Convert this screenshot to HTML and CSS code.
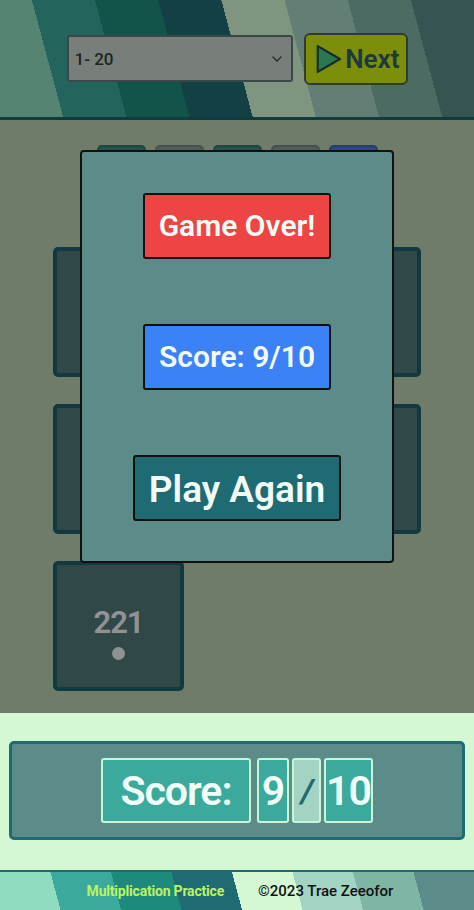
FILE: index.html
```html
<!DOCTYPE html>
<html lang="en">
<head>
    <meta charset="UTF-8">
    <meta name="viewport" content="width=device-width, initial-scale=1.0">
    <title>Multiplication Practice</title>
    <link rel="stylesheet" href="styles.css">
</head>
<body>
    <div class="stage">
        <header class="top stripes">
            <div class="select-wrap">
                <select class="range">
                    <option>1- 20</option>
                    <option>1- 50</option>
                    <option>1- 100</option>
                </select>
                <svg class="chevron" width="10" height="6" viewBox="0 0 10 6">
                    <path d="M1 1 L5 5 L9 1" fill="none" stroke="#3a4a48" stroke-width="1.4" stroke-linecap="round" stroke-linejoin="round"/>
                </svg>
            </div>
            <button class="next">
                <svg width="30" height="34" viewBox="0 0 30 34">
                    <path d="M2 2 L28 17 L2 32 Z" fill="#47c986" stroke="#234a44" stroke-width="2.5" stroke-linejoin="round"/>
                </svg>
                Next
            </button>
        </header>

        <main class="board">
            <div class="choices">
                <div class="choice teal"></div>
                <div class="choice gray"></div>
                <div class="choice teal"></div>
                <div class="choice gray"></div>
                <div class="choice blue"></div>
            </div>
            <div class="cards">
                <div class="card"><span class="num">84</span><span class="dot"></span></div>
                <div class="card"><span class="num">156</span><span class="dot"></span></div>
                <div class="card"><span class="num">90</span><span class="dot"></span></div>
                <div class="card"><span class="num">132</span><span class="dot"></span></div>
                <div class="card"><span class="num">221</span><span class="dot"></span></div>
            </div>
        </main>

        <div class="backdrop"></div>

        <div class="modal">
            <div class="pill over">Game Over!</div>
            <div class="pill result">Score: 9/10</div>
            <button class="pill again">Play Again</button>
        </div>
    </div>

    <section class="score-area">
        <div class="score-bar">
            <div class="box label">Score:</div>
            <div class="box val">9</div>
            <div class="box slash">/</div>
            <div class="box val wide">10</div>
        </div>
    </section>

    <footer class="foot stripes">
        <span class="app">Multiplication Practice</span>
        <span class="copy">©2023 Trae Zeeofor</span>
    </footer>
</body>
</html>
```

FILE: styles.css
```css
* {
    box-sizing: border-box;
}
body {
    margin: 0;
    font-family: Roboto, "Liberation Sans", sans-serif;
    background-color: #d4f8d4;
}
.stage {
    position: relative;
}
.stripes {
    background: linear-gradient(75deg,
        #8fdcc0 0 12.5%, #3ba99c 12.5% 25%, #1e8a7c 25% 37.5%, #1e6b73 37.5% 50%,
        #d4f8d4 50% 62.5%, #a3d3c3 62.5% 75%, #7fb5a5 75% 87.5%, #5b8c89 87.5% 100%);
}
.top {
    height: 120px;
    border-bottom: 3px solid #1a6468;
    display: flex;
    justify-content: center;
    align-items: center;
    gap: 11px;
}
.select-wrap {
    position: relative;
}
.range {
    appearance: none;
    width: 226px;
    height: 47px;
    padding: 0 6px;
    font-family: inherit;
    font-size: 17px;
    font-weight: 500;
    color: #2f3f3f;
    background: #c8d4cb;
    border: 2px solid #5f7878;
    border-radius: 3px;
}
.chevron {
    position: absolute;
    right: 11px;
    top: 21px;
}
.next {
    width: 104px;
    height: 52px;
    display: flex;
    align-items: center;
    gap: 4px;
    padding: 0 6px 0 10px;
    font-family: inherit;
    font-size: 26px;
    font-weight: 600;
    color: #2e6068;
    background: #d0ed11;
    border: 2px solid #4f6650;
    border-radius: 6px;
}
.board {
    height: 593px;
    background: #b9cfaf;
    padding-top: 25px;
}
.choices {
    display: flex;
    justify-content: center;
    gap: 9px;
}
.choice {
    width: 49px;
    height: 49px;
    border-radius: 5px;
    border: 2px solid rgba(0,0,0,0.15);
}
.choice.teal {
    background: #3b8a7c;
}
.choice.gray {
    background: #849e93;
}
.choice.blue {
    background: #4a7bcc;
}
.cards {
    display: grid;
    grid-template-columns: 131px 131px;
    justify-content: center;
    column-gap: 106px;
    row-gap: 27px;
    margin-top: 53px;
}
.card {
    height: 130px;
    background: #507878;
    border: 4px solid #1e5f69;
    border-radius: 5px;
    display: flex;
    flex-direction: column;
    align-items: center;
    justify-content: center;
    gap: 9px;
    padding-top: 14px;
}
.num {
    color: #f4f4f4;
    font-size: 31px;
    font-weight: 600;
    letter-spacing: -1px;
    line-height: 1;
}
.dot {
    width: 13px;
    height: 13px;
    border-radius: 50%;
    background: #eef4f4;
}
.backdrop {
    position: absolute;
    inset: 0;
    background: rgba(0,0,0,0.4);
}
.modal {
    position: absolute;
    top: 150px;
    left: 80px;
    width: 314px;
    height: 413px;
    background: #5b8c89;
    border: 2px solid #111;
    border-radius: 4px;
    display: flex;
    flex-direction: column;
    align-items: center;
    justify-content: center;
    gap: 65px;
}
.pill {
    height: 66px;
    display: flex;
    align-items: center;
    justify-content: center;
    color: #f2fbf6;
    font-family: inherit;
    font-weight: 600;
    border: 2px solid #111;
    border-radius: 3px;
    padding: 0;
}
.over {
    width: 188px;
    background: #ef4444;
    font-size: 30px;
}
.result {
    width: 188px;
    background: #3b82f6;
    font-size: 30px;
}
.again {
    width: 208px;
    background: #1e6b73;
    font-size: 37px;
    padding-top: 4px;
}
.score-area {
    height: 157px;
    padding: 28px 9px 0;
}
.score-bar {
    height: 99px;
    background: #5b8c89;
    border: 3px solid #1e6b73;
    border-radius: 5px;
    display: flex;
    justify-content: center;
    align-items: center;
    gap: 3px;
}
.box {
    height: 65px;
    display: flex;
    align-items: center;
    justify-content: center;
    background: #3ba99c;
    border: 2px solid #c8f5d8;
    border-radius: 3px;
    color: #f0fff8;
    font-size: 41px;
    font-weight: 600;
    letter-spacing: -1px;
}
.label {
    width: 150px;
    margin-right: 3px;
}
.val {
    width: 32px;
}
.val.wide {
    width: 49px;
}
.slash {
    width: 29px;
    background: #a3d3c3;
    color: #1e6b73;
    font-size: 34px;
    font-weight: 700;
    font-style: italic;
}
.foot {
    height: 40px;
    border-top: 2px solid #1e6b73;
    display: flex;
    justify-content: center;
    align-items: center;
    gap: 34px;
    padding-left: 6px;
}
.app {
    color: #bef264;
    font-size: 14px;
    font-weight: 700;
    letter-spacing: -0.2px;
}
.copy {
    color: #111;
    font-size: 15px;
    font-weight: 500;
}
```
